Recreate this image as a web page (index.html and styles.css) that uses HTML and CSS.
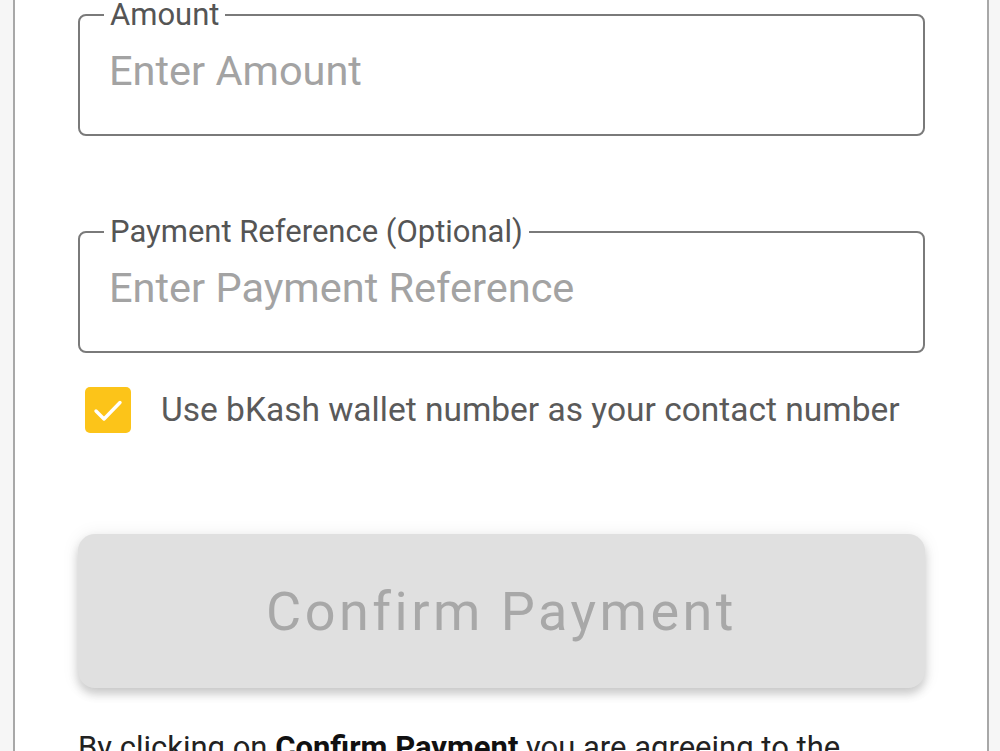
FILE: index.html
```html
<!DOCTYPE html>
<html>
<head>
<meta charset="utf-8">
<link rel="stylesheet" href="styles.css">
</head>
<body>
<div class="page">
  <div class="card">
    <fieldset class="field">
      <legend class="field-label">Amount</legend>
      <input class="field-input" type="text" placeholder="Enter Amount">
    </fieldset>
    <fieldset class="field field-second">
      <legend class="field-label">Payment Reference (Optional)</legend>
      <input class="field-input" type="text" placeholder="Enter Payment Reference">
    </fieldset>
    <label class="check-row">
      <span class="checkbox">
        <svg viewBox="0 0 46 46" width="46" height="46"><path d="M11 24 L19 32 L35 15.5" fill="none" stroke="#fff" stroke-width="3.4" stroke-linecap="round" stroke-linejoin="round"/></svg>
      </span>
      <span class="check-label">Use bKash wallet number as your contact number</span>
    </label>
    <button class="confirm" type="button" disabled>Confirm Payment</button>
    <p class="terms">By clicking on <b>Confirm Payment</b> you are agreeing to the</p>
  </div>
</div>
</body>
</html>
```

FILE: styles.css
```css
html, body {
  margin: 0;
  padding: 0;
  height: 100%;
  overflow: hidden;
}
body {
  background: #f6f6f6;
  font-family: Roboto, "Liberation Sans", sans-serif;
}
.page {
  padding: 0 11px 0 13px;
  height: 100%;
}
.card {
  background: #fff;
  border-left: 2px solid #a8a8a8;
  border-right: 2px solid #a8a8a8;
  height: 100%;
  padding: 0 62px 0 63px;
  box-sizing: border-box;
}
.field {
  margin: 0;
  border: 2px solid #7a7a7a;
  border-radius: 8px;
  padding: 0 24px 0 24px;
  height: 136px;
  box-sizing: border-box;
  display: block;
}
.field-second {
  margin-top: 81px;
}
.field-label {
  font-size: 31px;
  line-height: 30px;
  color: #555;
  padding: 0 6px;
  margin-left: 0;
}
.field-input {
  display: block;
  width: 100%;
  box-sizing: border-box;
  border: none;
  outline: none;
  background: transparent;
  font-family: Roboto, "Liberation Sans", sans-serif;
  font-size: 41.5px;
  line-height: 50px;
  height: 66px;
  padding: 15px 5px 0;
  color: #333;
}
.field-input::placeholder {
  color: #a3a3a3;
}
.check-row {
  display: flex;
  align-items: center;
  margin-top: 34px;
  padding-left: 7px;
  gap: 30px;
}
.checkbox {
  width: 46px;
  height: 46px;
  border-radius: 5px;
  background: #fcc419;
  display: flex;
  flex: none;
}
.check-label {
  font-size: 33.5px;
  color: #5a5a5a;
  line-height: 38px;
}
.confirm {
  display: block;
  width: 100%;
  margin-top: 101px;
  height: 154px;
  border: none;
  border-radius: 17px;
  background: #e0e0e0;
  color: #a8a8a8;
  font-family: Roboto, "Liberation Sans", sans-serif;
  font-size: 54px;
  letter-spacing: 3.5px;
  box-shadow: 0 6px 10px rgba(0,0,0,0.18), 0 1px 18px rgba(0,0,0,0.08);
}
.terms {
  margin: 42px 0 0;
  font-size: 31px;
  line-height: 36px;
  color: #222;
}
.terms b {
  color: #111;
}
```
